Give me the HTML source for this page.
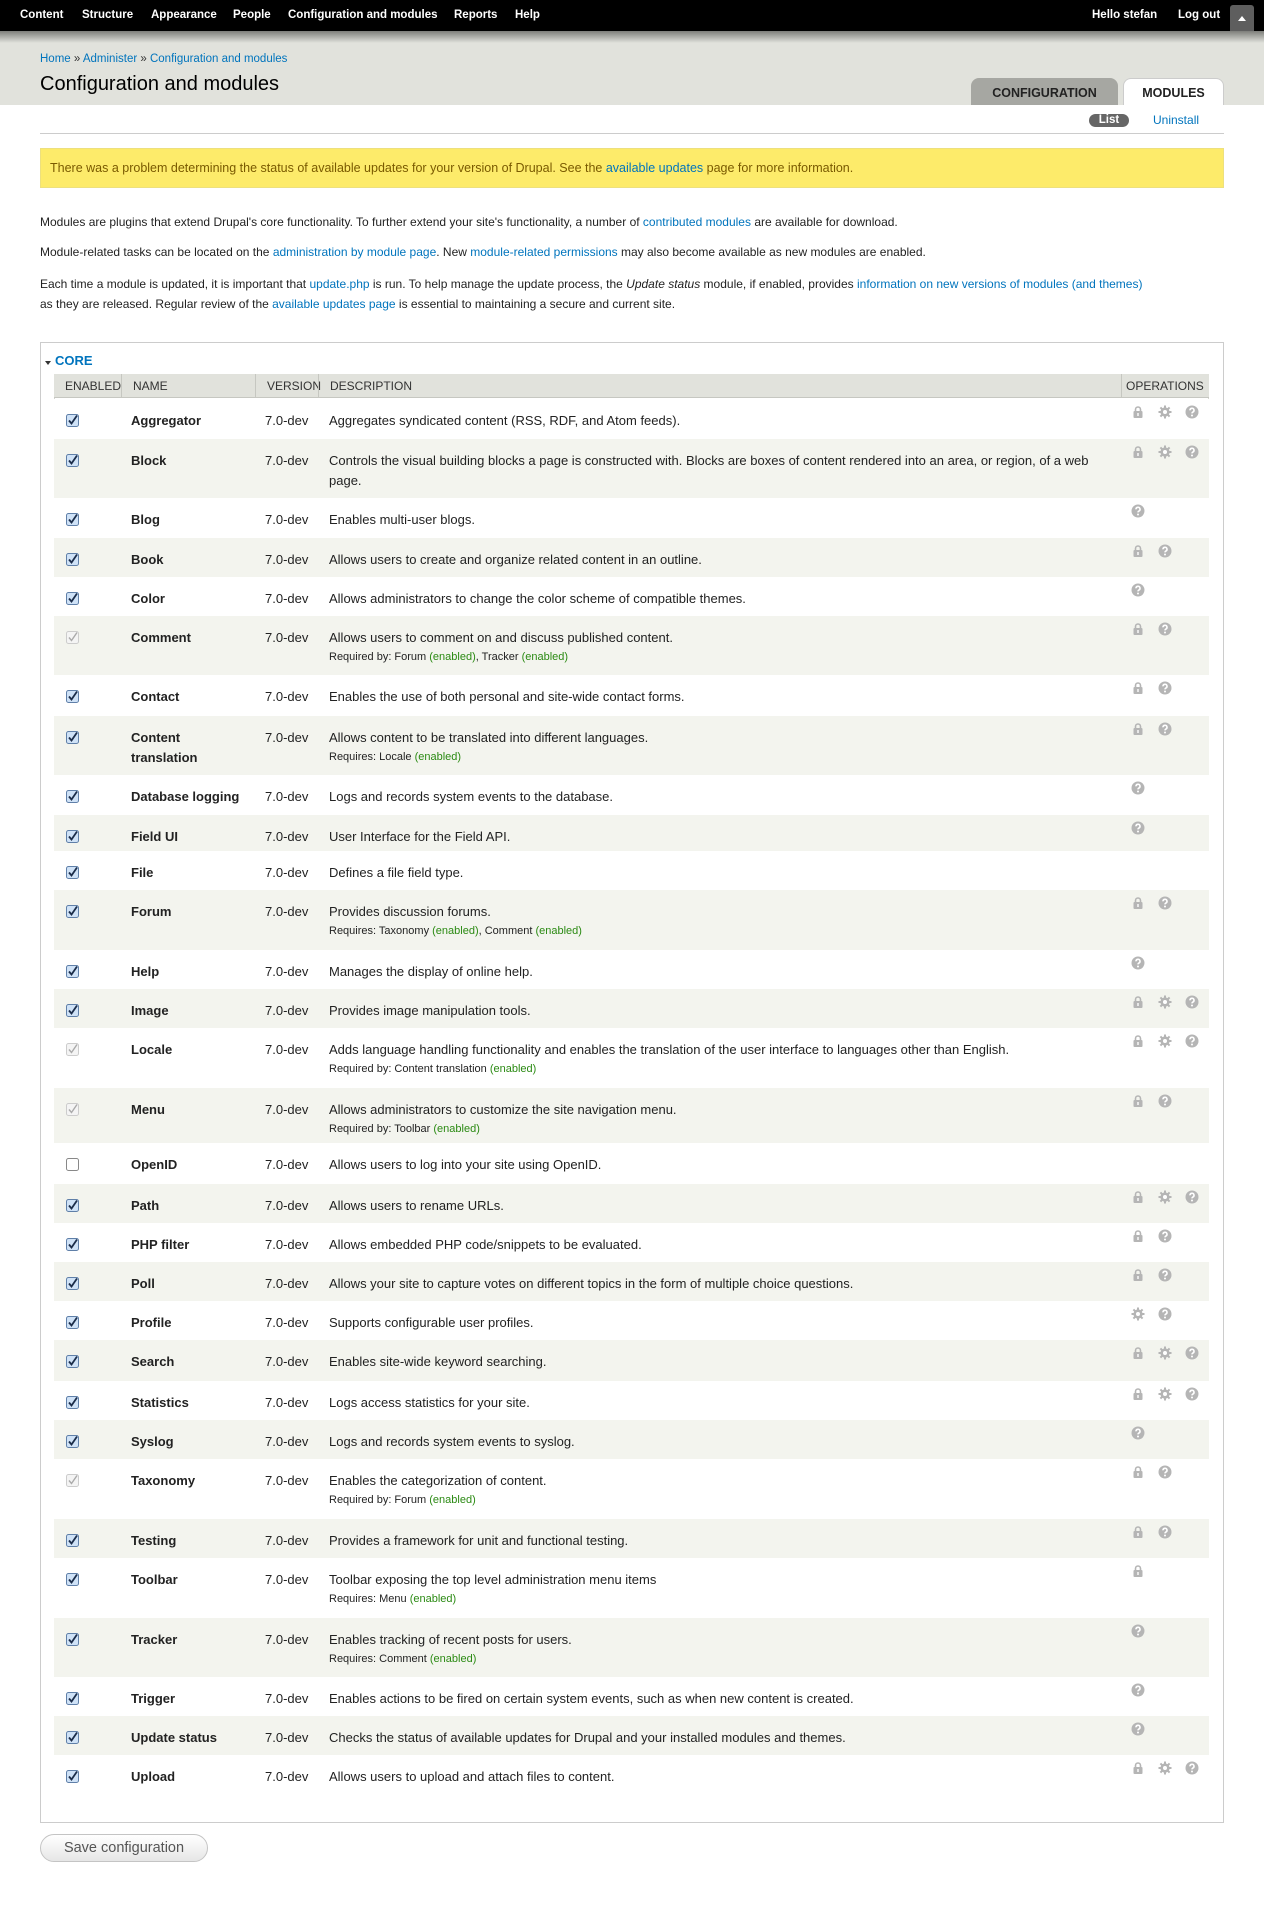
<!DOCTYPE html>
<html><head><meta charset="utf-8">
<style>
*{margin:0;padding:0;box-sizing:border-box}
body{width:1264px;height:1922px;background:#fff;font-family:"Liberation Sans",sans-serif;color:#333;position:relative;overflow:hidden}
a{color:#0074bd;text-decoration:none}
.abs{position:absolute}
#tb{left:0;top:0;width:1264px;height:31px;background:#000}
#tbs{left:0;top:31px;width:1264px;height:12px;background:linear-gradient(#7d7e7a,#e1e2dc)}
#tb span{position:absolute;top:9px;color:#fff;font-weight:bold;font-size:11.5px;white-space:nowrap}
#hdr{left:0;top:43px;width:1264px;height:62px;background:#e1e2dc}
.tab{top:78px;height:27px;border-radius:8px 8px 0 0;font-weight:bold;font-size:12.5px;text-align:center;line-height:30px;color:#222}
.intro{left:40px;font-size:12px;color:#222;white-space:nowrap}
.row{position:absolute;left:54px;width:1155px}
.row .c{position:absolute;top:12px;font-size:13px;line-height:20px;white-space:nowrap;color:#222}
.row .cb{position:absolute;left:12px;top:15px;width:13px;height:13px}
.row .ic{position:absolute;left:1077px;top:6px;height:14px;display:flex}
.row .ic svg{width:14px;height:14px;margin-right:13px}
.sub{font-size:11px;line-height:19px}
.en{color:#2b8a13}
.hd{position:absolute;top:0;height:24px;line-height:24px;font-size:12px;color:#333;padding-left:11px;border-left:1px solid #c6c7c1}
</style></head><body>
<div id="tb" class="abs">
<span style="left:20px">Content</span><span style="left:82px">Structure</span><span style="left:151px">Appearance</span><span style="left:233px">People</span><span style="left:288px">Configuration and modules</span><span style="left:454px">Reports</span><span style="left:515px">Help</span>
<span style="left:1092px">Hello stefan</span><span style="left:1178px">Log out</span>
<div style="position:absolute;left:1230px;top:5px;width:24px;height:26px;background:#5e5e5e;border-radius:3px 3px 0 0"><div style="position:absolute;left:8px;top:11px;border-left:4px solid transparent;border-right:4px solid transparent;border-bottom:5px solid #fff"></div></div>
</div>
<div id="tbs" class="abs"></div>
<div id="hdr" class="abs">
<div class="abs" style="left:40px;top:10px;font-size:11.5px"><a>Home</a> » <a>Administer</a> » <a>Configuration and modules</a></div>
<div class="abs" style="left:40px;top:30px;font-size:20px;color:#000">Configuration and modules</div>
</div>
<div class="abs tab" style="left:971px;width:147px;background:#a6a7a2">CONFIGURATION</div>
<div class="abs tab" style="left:1123px;width:101px;background:#fff;border:1px solid #ccc;border-bottom:none;line-height:28px">MODULES</div>
<div class="abs" style="left:1089px;top:114px;width:40px;height:13px;background:#666;border-radius:7px;color:#fff;font-weight:bold;font-size:11.5px;text-align:center;line-height:13px">List</div>
<div class="abs" style="left:1153px;top:113px;font-size:12px"><a>Uninstall</a></div>
<div class="abs" style="left:40px;top:133px;width:1184px;height:1px;background:#ccc"></div>
<div class="abs" style="left:40px;top:148px;width:1184px;height:40px;background:#fdeb6a;border:1px solid #ede07e;font-size:12.5px;line-height:38px;padding-left:9px;color:#7a5a00">There was a problem determining the status of available updates for your version of Drupal. See the <a>available updates</a> page for more information.</div>
<div class="abs intro" style="top:215px">Modules are plugins that extend Drupal's core functionality. To further extend your site's functionality, a number of <a>contributed modules</a> are available for download.</div>
<div class="abs intro" style="top:245px">Module-related tasks can be located on the <a>administration by module page</a>. New <a>module-related permissions</a> may also become available as new modules are enabled.</div>
<div class="abs intro" style="top:274px;line-height:20px">Each time a module is updated, it is important that <a>update.php</a> is run. To help manage the update process, the <i>Update status</i> module, if enabled, provides <a>information on new versions of modules (and themes)</a><br>as they are released. Regular review of the <a>available updates page</a> is essential to maintaining a secure and current site.</div>
<div class="abs" style="left:40px;top:342px;width:1184px;height:1481px;border:1px solid #ccc"></div>
<div class="abs" style="left:45px;top:361px;border-left:3.5px solid transparent;border-right:3.5px solid transparent;border-top:4px solid #333"></div>
<div class="abs" style="left:55px;top:353px;font-size:13px;font-weight:bold;color:#0074bd">CORE</div>
<div class="abs" style="left:54px;top:374px;width:1155px;height:1425px;border:1px solid #d4d5cf"></div>
<div class="abs" style="left:54px;top:374px;width:1155px;height:24px;background:#e1e2dc;border-bottom:1px solid #c6c7c1">
<div class="hd" style="left:0;border:none;padding-left:11px;width:67px">ENABLED</div>
<div class="hd" style="left:67px;width:134px">NAME</div>
<div class="hd" style="left:201px;width:63px">VERSION</div>
<div class="hd" style="left:264px;width:803px">DESCRIPTION</div>
<div class="hd" style="left:1067px;width:88px;padding-left:4px">OPERATIONS</div>
</div>
<svg width="0" height="0" style="position:absolute">
<defs>
<symbol id="L" viewBox="0 0 14 14"><path d="M4.5 6V4.5a2.5 2.5 0 0 1 5 0V6" fill="none" stroke="#b5b5b5" stroke-width="1.6"/><rect x="2.5" y="6" width="9" height="7" rx="1" fill="#b5b5b5"/><rect x="6.3" y="8" width="1.4" height="3" fill="#fff"/></symbol>
<symbol id="G" viewBox="0 0 14 14"><g fill="#b5b5b5"><circle cx="7" cy="7" r="4.6"/><rect x="6" y="0.5" width="2" height="13"/><rect x="0.5" y="6" width="13" height="2"/><rect x="6" y="0.5" width="2" height="13" transform="rotate(45 7 7)"/><rect x="6" y="0.5" width="2" height="13" transform="rotate(-45 7 7)"/></g><circle cx="7" cy="7" r="2" fill="#fff"/></symbol>
<symbol id="Q" viewBox="0 0 14 14"><circle cx="7" cy="7" r="6.5" fill="#b5b5b5"/><path d="M5 5.3a2 2 0 1 1 2.8 1.8c-.6.3-.8.6-.8 1.3" fill="none" stroke="#fff" stroke-width="1.6"/><circle cx="7" cy="10.5" r="1" fill="#fff"/></symbol>
<symbol id="C" viewBox="0 0 13 13"><rect x=".5" y=".5" width="12" height="12" rx="2" fill="#cfe2f7" stroke="#5f7fa8"/><path d="M3 6.5l2.5 3L11 1.5" fill="none" stroke="#1b2d4a" stroke-width="1.8"/></symbol>
<symbol id="D" viewBox="0 0 13 13"><rect x=".5" y=".5" width="12" height="12" rx="2" fill="#f4f4f4" stroke="#ccc"/><path d="M3 6.5l2.5 3L11 1.5" fill="none" stroke="#aaa" stroke-width="1.4"/></symbol>
<symbol id="E" viewBox="0 0 13 13"><rect x=".5" y=".5" width="12" height="12" rx="2" fill="#fff" stroke="#888"/></symbol>
</defs></svg>
<div id="rows"></div>
<script>
var R=[
["Aggregator","Aggregates syndicated content (RSS, RDF, and Atom feeds).","","LGQ","C",40],
["Block","Controls the visual building blocks a page is constructed with. Blocks are boxes of content rendered into an area, or region, of a web<br>page.","","LGQ","C",59],
["Blog","Enables multi-user blogs.","","Q","C",40],
["Book","Allows users to create and organize related content in an outline.","","LQ","C",39],
["Color","Allows administrators to change the color scheme of compatible themes.","","Q","C",39],
["Comment","Allows users to comment on and discuss published content.","Required by: Forum <span class=en>(enabled)</span>, Tracker <span class=en>(enabled)</span>","LQ","D",59],
["Contact","Enables the use of both personal and site-wide contact forms.","","LQ","C",41],
["Content<br>translation","Allows content to be translated into different languages.","Requires: Locale <span class=en>(enabled)</span>","LQ","C",59],
["Database logging","Logs and records system events to the database.","","Q","C",40],
["Field UI","User Interface for the Field API.","","Q","C",36],
["File","Defines a file field type.","","","C",39],
["Forum","Provides discussion forums.","Requires: Taxonomy <span class=en>(enabled)</span>, Comment <span class=en>(enabled)</span>","LQ","C",60],
["Help","Manages the display of online help.","","Q","C",39],
["Image","Provides image manipulation tools.","","LGQ","C",39],
["Locale","Adds language handling functionality and enables the translation of the user interface to languages other than English.","Required by: Content translation <span class=en>(enabled)</span>","LGQ","D",60],
["Menu","Allows administrators to customize the site navigation menu.","Required by: Toolbar <span class=en>(enabled)</span>","LQ","D",55],
["OpenID","Allows users to log into your site using OpenID.","","","E",41],
["Path","Allows users to rename URLs.","","LGQ","C",39],
["PHP filter","Allows embedded PHP code/snippets to be evaluated.","","LQ","C",39],
["Poll","Allows your site to capture votes on different topics in the form of multiple choice questions.","","LQ","C",39],
["Profile","Supports configurable user profiles.","","GQ","C",39],
["Search","Enables site-wide keyword searching.","","LGQ","C",41],
["Statistics","Logs access statistics for your site.","","LGQ","C",39],
["Syslog","Logs and records system events to syslog.","","Q","C",39],
["Taxonomy","Enables the categorization of content.","Required by: Forum <span class=en>(enabled)</span>","LQ","D",60],
["Testing","Provides a framework for unit and functional testing.","","LQ","C",39],
["Toolbar","Toolbar exposing the top level administration menu items","Requires: Menu <span class=en>(enabled)</span>","L","C",60],
["Tracker","Enables tracking of recent posts for users.","Requires: Comment <span class=en>(enabled)</span>","Q","C",59],
["Trigger","Enables actions to be fired on certain system events, such as when new content is created.","","Q","C",39],
["Update status","Checks the status of available updates for Drupal and your installed modules and themes.","","Q","C",39],
["Upload","Allows users to upload and attach files to content.","","LGQ","C",44]
];
var y=399,h="";
R.forEach(function(r,i){
 var ic=r[3].split("").map(function(c){return '<svg><use href="#'+c+'"/></svg>'}).join("");
 h+='<div class="row" style="top:'+y+'px;height:'+r[5]+'px;background:'+(i%2?'#f3f4ee':'#fff')+'">'+
 '<svg class="cb"><use href="#'+r[4]+'"/></svg>'+
 '<div class="c" style="left:77px;font-weight:bold">'+r[0]+'</div>'+
 '<div class="c" style="left:211px">7.0-dev</div>'+
 '<div class="c" style="left:275px">'+r[1]+(r[2]?'<div class="sub">'+r[2]+'</div>':'')+'</div>'+
 '<div class="ic">'+ic+'</div></div>';
 y+=r[5];
});
document.getElementById("rows").innerHTML=h;
</script>
<div class="abs" style="left:40px;top:1834px;width:168px;height:28px;border:1px solid #c4c4c4;border-radius:14px;background:linear-gradient(#fff,#e6e6e6);font-size:14.5px;color:#555;text-align:center;line-height:26px">Save configuration</div>
</body></html>
